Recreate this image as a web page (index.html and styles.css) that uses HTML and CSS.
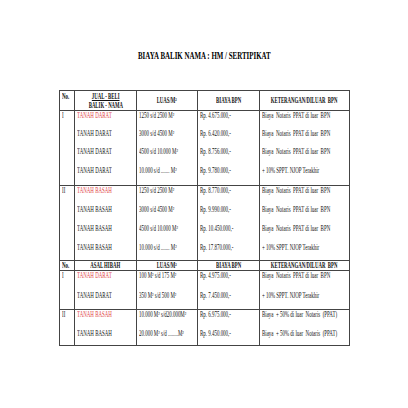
FILE: index.html
```html
<!DOCTYPE html>
<html>
<head>
<meta charset="utf-8">
<link rel="stylesheet" href="styles.css">
</head>
<body>
<div class="page">
  <div class="title"><span>BIAYA BALIK NAMA : HM / SERTIPIKAT</span></div>
  <table class="grid">
    <colgroup>
      <col class="c1"><col class="c2"><col class="c3"><col class="c4"><col class="c5">
    </colgroup>
    <tr class="head h20">
      <td class="top"><span class="s">No.</span></td>
      <td><div class="hc"><span class="u">JUAL - BELI</span></div><div class="hc"><span>BALIK - NAMA</span></div></td>
      <td><div class="hc"><span>LUAS/M²</span></div></td>
      <td><div class="hc"><span>BIAYA BPN</span></div></td>
      <td><div class="hc"><span>KETERANGAN/DILUAR&nbsp; BPN</span></div></td>
    </tr>
    <tr class="sec h18">
      <td><span class="s">I</span></td>
      <td><span class="s red">TANAH DARAT</span></td>
      <td><span class="s">1250 s/d 2500 M²</span></td>
      <td><span class="s">Rp. 4.675.000,-</span></td>
      <td><span class="s">Biaya&nbsp; Notaris&nbsp; PPAT di luar&nbsp; BPN</span></td>
    </tr>
    <tr class="h18">
      <td></td>
      <td><span class="s">TANAH DARAT</span></td>
      <td><span class="s">3000 s/d 4500 M²</span></td>
      <td><span class="s">Rp. 6.420.000,-</span></td>
      <td><span class="s">Biaya&nbsp; Notaris&nbsp; PPAT di luar&nbsp; BPN</span></td>
    </tr>
    <tr class="h19">
      <td></td>
      <td><span class="s">TANAH DARAT</span></td>
      <td><span class="s">4500 s/d 10.000 M²</span></td>
      <td><span class="s">Rp. 8.756.000,-</span></td>
      <td><span class="s">Biaya&nbsp; Notaris&nbsp; PPAT di luar&nbsp; BPN</span></td>
    </tr>
    <tr class="h20">
      <td></td>
      <td><span class="s">TANAH DARAT</span></td>
      <td><span class="s">10.000 s/d ....... M²</span></td>
      <td><span class="s">Rp. 9.780.000,-</span></td>
      <td><span class="s">+ 10% SPPT. NJOP Terakhir</span></td>
    </tr>
    <tr class="sec h19">
      <td><span class="s">II</span></td>
      <td><span class="s red">TANAH BASAH</span></td>
      <td><span class="s">1250 s/d 2500 M²</span></td>
      <td><span class="s">Rp. 8.770.000,-</span></td>
      <td><span class="s">Biaya&nbsp; Notaris&nbsp; PPAT di luar&nbsp; BPN</span></td>
    </tr>
    <tr class="h19">
      <td></td>
      <td><span class="s">TANAH BASAH</span></td>
      <td><span class="s">3000 s/d 4500 M²</span></td>
      <td><span class="s">Rp. 9.990.000,-</span></td>
      <td><span class="s">Biaya&nbsp; Notaris&nbsp; PPAT di luar&nbsp; BPN</span></td>
    </tr>
    <tr class="h19">
      <td></td>
      <td><span class="s">TANAH BASAH</span></td>
      <td><span class="s">4500 s/d 10.000 M²</span></td>
      <td><span class="s">Rp. 10.450.000,-</span></td>
      <td><span class="s">Biaya&nbsp; Notaris&nbsp; PPAT di luar&nbsp; BPN</span></td>
    </tr>
    <tr class="h18">
      <td></td>
      <td><span class="s">TANAH BASAH</span></td>
      <td><span class="s">10.000 s/d ....... M²</span></td>
      <td><span class="s">Rp. 17.870.000,-</span></td>
      <td><span class="s">+ 10% SPPT. NJOP Terakhir</span></td>
    </tr>
    <tr class="head sec h10">
      <td><span class="s">No.</span></td>
      <td><div class="hc"><span>ASAL HIBAH</span></div></td>
      <td><div class="hc"><span>LUAS/M²</span></div></td>
      <td><div class="hc"><span>BIAYA BPN</span></div></td>
      <td><div class="hc"><span>KETERANGAN/DILUAR&nbsp; BPN</span></div></td>
    </tr>
    <tr class="sec h20">
      <td><span class="s">I</span></td>
      <td><span class="s red">TANAH DARAT</span></td>
      <td><span class="s">100 M² s/d 175 M²</span></td>
      <td><span class="s">Rp. 4.975.000,-</span></td>
      <td><span class="s">Biaya&nbsp; Notaris&nbsp; PPAT di luar&nbsp; BPN</span></td>
    </tr>
    <tr class="h19">
      <td></td>
      <td><span class="s">TANAH DARAT</span></td>
      <td><span class="s">350 M² s/d 500 M²</span></td>
      <td><span class="s">Rp. 7.450.000,-</span></td>
      <td><span class="s">+ 10% SPPT. NJOP Terakhir</span></td>
    </tr>
    <tr class="sec h19">
      <td><span class="s">II</span></td>
      <td><span class="s red">TANAH BASAH</span></td>
      <td><span class="s">10.000 M² s/d20.000M²</span></td>
      <td><span class="s">Rp. 6.975.000,-</span></td>
      <td><span class="s">Biaya&nbsp; + 50% di luar&nbsp; Notaris&nbsp; (PPAT)</span></td>
    </tr>
    <tr class="h17">
      <td></td>
      <td><span class="s">TANAH BASAH</span></td>
      <td><span class="s">20.000 M² s/d ........M²</span></td>
      <td><span class="s">Rp. 9.450.000,-</span></td>
      <td><span class="s">Biaya&nbsp; + 50% di luar&nbsp; Notaris&nbsp; (PPAT)</span></td>
    </tr>
  </table>
</div>
</body>
</html>
```

FILE: styles.css
```css
html, body {
  margin: 0;
  padding: 0;
  background: #ffffff;
}
.page {
  width: 408px;
  height: 408px;
  padding-top: 49px;
  box-sizing: border-box;
  font-family: "Liberation Serif", "Times New Roman", serif;
  color: #111;
}
.title {
  display: flex;
  justify-content: center;
  height: 13px;
  line-height: 13px;
  font-size: 11px;
  font-weight: bold;
  color: #000;
}
.title span {
  display: inline-block;
  white-space: nowrap;
  transform: scaleX(0.63);
  transform-origin: 50% 50%;
}
.grid {
  margin: 28px 0 0 59px;
  width: 290px;
  table-layout: fixed;
  border-collapse: collapse;
  border: 1px solid #444;
  font-size: 7.5px;
  line-height: 8px;
}
.c1 { width: 15px; }
.c2 { width: 62px; }
.c3 { width: 61px; }
.c4 { width: 62px; }
.c5 { width: 90px; }
.grid td {
  border-left: 1px solid #444;
  border-right: 1px solid #444;
  padding: 1px 0 0 2px;
  vertical-align: top;
  overflow: visible;
}
.grid tr.sec td {
  border-top: 1px solid #444;
}
.grid tr.head td {
  font-weight: bold;
  vertical-align: middle;
  padding: 0 1px;
  border-bottom: 1px solid #444;
}
.grid tr.head td.top {
  vertical-align: top;
  padding-top: 2px;
  padding-left: 2px;
}
.grid tr.head td:first-child {
  padding-left: 2px;
}
.hc {
  display: flex;
  justify-content: center;
  height: 9px;
  line-height: 9px;
}
.h10 .hc {
  height: 9px;
  line-height: 9px;
}
.hc span {
  display: inline-block;
  white-space: nowrap;
  transform: scaleX(0.64);
  transform-origin: 50% 50%;
}
.s {
  display: inline-block;
  white-space: nowrap;
  transform: scaleX(0.66);
  transform-origin: 0 50%;
}
.u {
  text-decoration: underline;
}
.red {
  color: #e0413f;
}
.h10 { height: 10px; }
.h17 { height: 17px; }
.h18 { height: 18px; }
.h19 { height: 19px; }
.h20 { height: 20px; }
```
